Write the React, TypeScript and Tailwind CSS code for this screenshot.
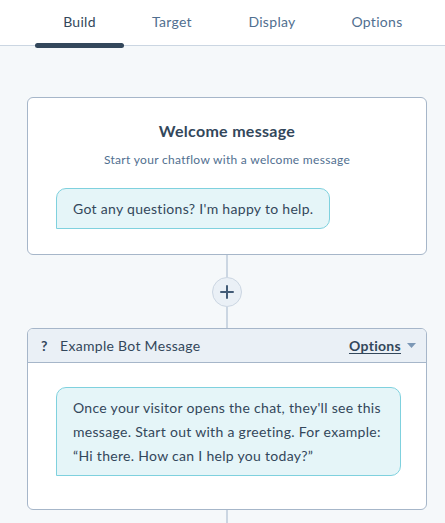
import React from 'react';

const tabs = [
    { label: 'Build', w: 'w-[89px]' },
    { label: 'Target', w: 'w-[96px]' },
    { label: 'Display', w: 'w-[104px]' },
    { label: 'Options', w: 'w-[106px]' },
];

const Connector: React.FC<{ plus?: boolean; h?: string }> = ({ plus, h }) => (
    <div className="flex flex-col items-center w-[400px]">
        {plus ? (
            <>
                <div className="w-[2px] h-[22px] bg-[#cbd6e2]" />
                <div className="w-[30px] h-[30px] rounded-full bg-[#eaf0f6] border border-[#cbd6e2] flex items-center justify-center">
                    <svg width="14" height="14" viewBox="0 0 14 14">
                        <path d="M7 1v12M1 7h12" stroke="#425b76" strokeWidth="2" strokeLinecap="round" />
                    </svg>
                </div>
                <div className="w-[2px] h-[21px] bg-[#cbd6e2]" />
            </>
        ) : (
            <div className={`w-[2px] bg-[#cbd6e2] ${h}`} />
        )}
    </div>
);

export default function App() {
    return (
        <div className="w-[445px] h-[523px] overflow-hidden bg-[#f5f8fa] text-[#33475b] tracking-[0.3px]" style={{ fontFamily: 'Lato, "Open Sans", sans-serif' }}>
            <div className="h-[46px] bg-white border-b border-[#cbd6e2] flex pl-[35px]">
                {tabs.map((t, i) => (
                    <div key={t.label} className={`relative ${t.w} text-center pt-[11px] text-[14px] ${i === 0 ? 'text-[#33475b]' : 'text-[#516f90]'}`}>
                        {t.label}
                        {i === 0 && <div className="absolute left-0 right-0 bottom-[-3px] h-[5px] rounded-full bg-[#33475b]" />}
                    </div>
                ))}
            </div>

            <div className="flex flex-col pl-[27px] pt-[51px]">
                <div className="w-[400px] h-[158px] bg-white border border-[#a6b6c9] rounded-[6px] flex flex-col items-center pt-[23px]">
                    <div className="text-[16px] font-bold leading-5">Welcome message</div>
                    <div className="text-[12px] leading-4 text-[#516f90] mt-[11px]">Start your chatflow with a welcome message</div>
                    <div className="self-start ml-[28px] mt-[20px] h-[41px] px-[16px] flex items-center bg-[#e5f5f8] border border-[#7fd1de] rounded-tl-[10px] rounded-tr-[10px] rounded-br-[10px] text-[14px]">
                        Got any questions? I'm happy to help.
                    </div>
                </div>

                <Connector plus />

                <div className="w-[400px] h-[182px] bg-white border border-[#a6b6c9] rounded-[6px] overflow-hidden flex flex-col">
                    <div className="h-[34px] bg-[#eaf0f6] border-b border-[#a6b6c9] flex items-center pl-[13px] pr-[10px] text-[14px]">
                        <span className="font-bold w-[19px]">?</span>
                        <span>Example Bot Message</span>
                        <span className="ml-auto font-bold underline underline-offset-2">Options</span>
                        <svg width="9" height="5" viewBox="0 0 9 5" className="ml-[6px]">
                            <path d="M0 0h9L4.5 5z" fill="#7c98b6" />
                        </svg>
                    </div>
                    <div className="pt-[24px] pl-[28px]">
                        <div className="w-[345px] h-[89px] px-[16px] pt-[8px] bg-[#e5f5f8] border border-[#7fd1de] rounded-tl-[10px] rounded-tr-[10px] rounded-br-[10px] text-[14px] leading-6">
                            Once your visitor opens the chat, they'll see this message. Start out with a greeting. For example: “Hi there. How can I help you today?”
                        </div>
                    </div>
                </div>

                <Connector h="h-[20px]" />
            </div>
        </div>
    );
}
